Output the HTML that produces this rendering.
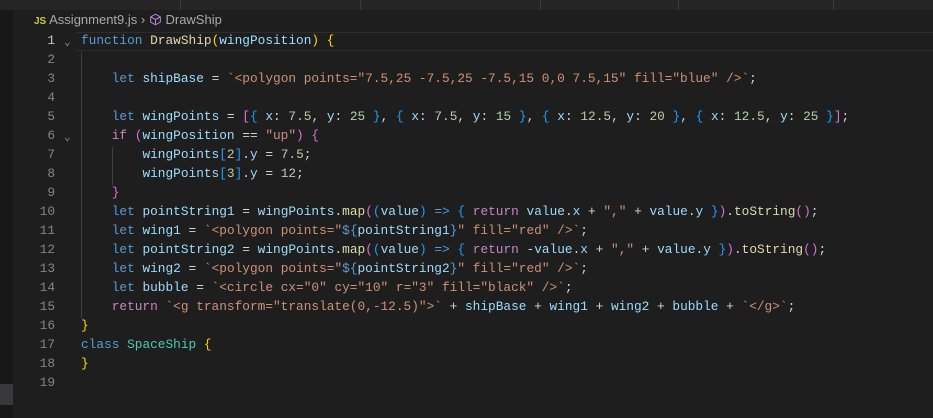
<!DOCTYPE html>
<html><head><meta charset="utf-8"><style>
body{margin:0;width:933px;height:418px;background:#1e1e1e;overflow:hidden;position:relative;font-family:"Liberation Mono",monospace;}
.top{position:absolute;left:0;top:0;width:933px;height:10px;background:#252526;}
.top i{position:absolute;top:0;width:1px;height:10px;background:#3a3a3a;}
.left{position:absolute;left:0;top:10px;width:13px;height:408px;background:#181818;}
.sel{position:absolute;left:0;top:384px;width:13px;height:21px;background:#37373d;}
.bc{position:absolute;left:34px;top:12px;font-family:"Liberation Sans",sans-serif;font-size:13px;color:#a9a9a9;}
.cur{position:absolute;left:76px;top:32px;width:857px;height:17px;border-top:1px solid #2c2c2c;border-bottom:1px solid #2c2c2c;}
.ln{position:absolute;left:13px;width:42px;text-align:right;font-size:12.8px;color:#858585;}
.ln.a{color:#c6c6c6;}
.code{position:absolute;left:81px;font-size:12.8px;color:#d4d4d4;white-space:pre;}
.g{position:absolute;width:1px;background:#404040;}
.k{color:#569cd6}.c{color:#c586c0}.f{color:#dcdcaa}.v{color:#9cdcfe}.s{color:#ce9178}.n{color:#b5cea8}.t{color:#4ec9b0}
.b1{color:#ffd700}.b2{color:#da70d6}.b3{color:#179fff}
.fold{position:absolute;left:64px;font-size:11px;color:#8a8a8a;}
</style></head><body>
<div class="top"><i style="left:180px"></i><i style="left:360px"></i><i style="left:540px"></i><i style="left:678px"></i><i style="left:833px"></i></div>
<div class="left"></div><div class="sel"></div>
<div class="bc"><span style="color:#cbcb41;font-weight:bold;font-size:10px">JS</span> Assignment9.js <span style="color:#aaa">›</span> <svg width="13" height="13" viewBox="0 0 16 16" style="vertical-align:-2px"><path d="M8 1.5 14 4.8v6.4L8 14.5 2 11.2V4.8Z M2 4.8 8 8l6-3.2 M8 8v6.5" fill="none" stroke="#b180d7" stroke-width="1.3"/></svg> DrawShip</div>
<div class="cur"></div>
<div class="g" style="left:81px;top:52px;height:266px"></div>
<div class="g" style="left:112px;top:147px;height:38px"></div>
<div class="fold" style="top:35px">⌄</div>
<div class="fold" style="top:130px">⌄</div>
<div id="lines"></div>
<script>
const L=[
'<span class="k">function</span> <span class="f">DrawShip</span><span class="b1">(</span><span class="v">wingPosition</span><span class="b1">)</span> <span class="b1">{</span>',
'',
'    <span class="k">let</span> <span class="v">shipBase</span> = <span class="s">`&lt;polygon points="7.5,25 -7.5,25 -7.5,15 0,0 7.5,15" fill="blue" /&gt;`</span>;',
'',
'    <span class="k">let</span> <span class="v">wingPoints</span> = <span class="b2">[</span><span class="b3">{</span> <span class="v">x</span>: <span class="n">7.5</span>, <span class="v">y</span>: <span class="n">25</span> <span class="b3">}</span>, <span class="b3">{</span> <span class="v">x</span>: <span class="n">7.5</span>, <span class="v">y</span>: <span class="n">15</span> <span class="b3">}</span>, <span class="b3">{</span> <span class="v">x</span>: <span class="n">12.5</span>, <span class="v">y</span>: <span class="n">20</span> <span class="b3">}</span>, <span class="b3">{</span> <span class="v">x</span>: <span class="n">12.5</span>, <span class="v">y</span>: <span class="n">25</span> <span class="b3">}</span><span class="b2">]</span>;',
'    <span class="c">if</span> <span class="b2">(</span><span class="v">wingPosition</span> == <span class="s">"up"</span><span class="b2">)</span> <span class="b2">{</span>',
'        <span class="v">wingPoints</span><span class="b3">[</span><span class="n">2</span><span class="b3">]</span>.<span class="v">y</span> = <span class="n">7.5</span>;',
'        <span class="v">wingPoints</span><span class="b3">[</span><span class="n">3</span><span class="b3">]</span>.<span class="v">y</span> = <span class="n">12</span>;',
'    <span class="b2">}</span>',
'    <span class="k">let</span> <span class="v">pointString1</span> = <span class="v">wingPoints</span>.<span class="f">map</span><span class="b2">(</span><span class="b3">(</span><span class="v">value</span><span class="b3">)</span> <span class="k">=&gt;</span> <span class="b3">{</span> <span class="c">return</span> <span class="v">value</span>.<span class="v">x</span> + <span class="s">","</span> + <span class="v">value</span>.<span class="v">y</span> <span class="b3">}</span><span class="b2">)</span>.<span class="f">toString</span><span class="b2">()</span>;',
'    <span class="k">let</span> <span class="v">wing1</span> = <span class="s">`&lt;polygon points="</span><span class="k">${</span><span class="v">pointString1</span><span class="k">}</span><span class="s">" fill="red" /&gt;`</span>;',
'    <span class="k">let</span> <span class="v">pointString2</span> = <span class="v">wingPoints</span>.<span class="f">map</span><span class="b2">(</span><span class="b3">(</span><span class="v">value</span><span class="b3">)</span> <span class="k">=&gt;</span> <span class="b3">{</span> <span class="c">return</span> -<span class="v">value</span>.<span class="v">x</span> + <span class="s">","</span> + <span class="v">value</span>.<span class="v">y</span> <span class="b3">}</span><span class="b2">)</span>.<span class="f">toString</span><span class="b2">()</span>;',
'    <span class="k">let</span> <span class="v">wing2</span> = <span class="s">`&lt;polygon points="</span><span class="k">${</span><span class="v">pointString2</span><span class="k">}</span><span class="s">" fill="red" /&gt;`</span>;',
'    <span class="k">let</span> <span class="v">bubble</span> = <span class="s">`&lt;circle cx="0" cy="10" r="3" fill="black" /&gt;`</span>;',
'    <span class="c">return</span> <span class="s">`&lt;g transform="translate(0,-12.5)"&gt;`</span> + <span class="v">shipBase</span> + <span class="v">wing1</span> + <span class="v">wing2</span> + <span class="v">bubble</span> + <span class="s">`&lt;/g&gt;`</span>;',
'<span class="b1">}</span>',
'<span class="k">class</span> <span class="t">SpaceShip</span> <span class="b1">{</span>',
'<span class="b1">}</span>',
''];
let h='';
L.forEach((l,i)=>{const y=33+i*19;
h+=`<div class="ln${i==0?' a':''}" style="top:${y}px">${i+1}</div><div class="code" style="top:${y}px">${l}</div>`;});
document.getElementById('lines').innerHTML=h;
</script>
</body></html>
